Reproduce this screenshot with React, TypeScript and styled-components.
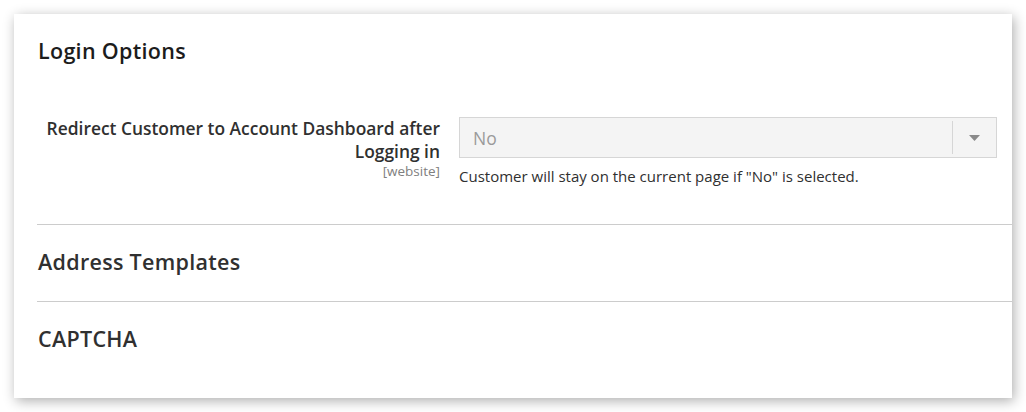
import React from "react";
import styled, { createGlobalStyle } from "styled-components";

const Global = createGlobalStyle`
  html, body { margin: 0; padding: 0; background: #ffffff; }
  body { font-family: "Open Sans", "Liberation Sans", sans-serif; }
  * { box-sizing: border-box; }
`;

const Page = styled.div`
  padding: 14px 14px 14px 14px;
  width: 1026px;
  height: 412px;
`;

const Card = styled.div`
  width: 998px;
  height: 384px;
  background: #ffffff;
  box-shadow: 2px 3px 12px rgba(0, 0, 0, 0.32);
  padding-left: 23px;
`;

const Section = styled.section<{ $open?: boolean }>`
  border-top: ${(p) => (p.$open ? "none" : "1px solid #cccccc")};
  padding-bottom: ${(p) => (p.$open ? "39px" : "0")};
`;

const Title = styled.h2<{ $dark?: boolean }>`
  margin: 0;
  padding: 23px 0 25px 1px;
  font-size: 21.5px;
  line-height: 28px;
  font-weight: 600;
  letter-spacing: 0.3px;
  color: ${(p) => (p.$dark ? "#1c1c1c" : "#303030")};
`;

const FieldRow = styled.div`
  display: grid;
  grid-template-columns: 403px 538px;
  column-gap: 19px;
  margin-top: 27px;
`;

const LabelCell = styled.div`
  text-align: right;
  display: flex;
  flex-direction: column;
  align-items: flex-end;
`;

const LabelText = styled.label`
  font-size: 17.4px;
  line-height: 23px;
  font-weight: 600;
  color: #303030;
`;

const Scope = styled.span`
  font-size: 13.5px;
  line-height: 17px;
  color: #808080;
`;

const Control = styled.div`
  display: flex;
  flex-direction: column;
`;

const Select = styled.div`
  display: flex;
  height: 41px;
  background: #f4f4f4;
  border: 1px solid #d6d6d6;
`;

const SelectValue = styled.div`
  flex: 1;
  padding-left: 13px;
  display: flex;
  align-items: center;
  font-size: 17.5px;
  color: #9a9a9a;
`;

const Arrow = styled.div`
  width: 44px;
  display: flex;
  align-items: center;
  justify-content: center;
  margin: 3px 0;
  border-left: 1px solid #d6d6d6;
`;

const Note = styled.div`
  margin-top: 9px;
  font-size: 15px;
  line-height: 18px;
  color: #303030;
`;

export default function App() {
  return (
    <>
      <Global />
      <Page>
        <Card>
          <Section $open>
            <Title $dark>Login Options</Title>
            <FieldRow>
              <LabelCell>
                <LabelText>
                  Redirect Customer to Account Dashboard after
                  <br />
                  Logging in
                </LabelText>
                <Scope>[website]</Scope>
              </LabelCell>
              <Control>
                <Select>
                  <SelectValue>No</SelectValue>
                  <Arrow>
                    <svg width="11" height="6" viewBox="0 0 11 6">
                      <polygon points="0,0 11,0 5.5,6" fill="#8a8a8a" />
                    </svg>
                  </Arrow>
                </Select>
                <Note>Customer will stay on the current page if "No" is selected.</Note>
              </Control>
            </FieldRow>
          </Section>
          <Section>
            <Title>Address Templates</Title>
          </Section>
          <Section>
            <Title>CAPTCHA</Title>
          </Section>
        </Card>
      </Page>
    </>
  );
}
